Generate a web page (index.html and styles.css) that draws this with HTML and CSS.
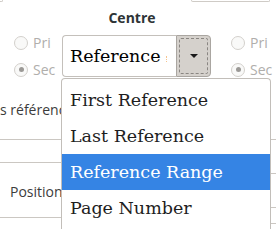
FILE: index.html
```html
<!DOCTYPE html>
<html>
<head>
<meta charset="utf-8">
<link rel="stylesheet" href="styles.css">
</head>
<body>
<div class="page">
  <div class="edges"><span class="edge-l"></span><span class="edge-r"></span></div>
  <div class="title">Centre</div>
  <div class="row">
    <div class="radios left">
      <label class="radio"><span class="circle"></span>Pri</label>
      <label class="radio"><span class="circle checked"></span>Sec</label>
    </div>
    <div class="select">
      <span class="sel-text">Reference</span>
      <span class="sel-btn"><span class="focus"><span class="tri"></span></span></span>
    </div>
    <div class="radios right">
      <label class="radio"><span class="circle"></span>Pri</label>
      <label class="radio"><span class="circle checked"></span>Sec</label>
    </div>
  </div>
  <div class="lower">
    <div class="lcol">
      <div class="cell c1">s références</div>
      <div class="cell c2"></div>
      <div class="cell c3">Position</div>
      <div class="cell c4"></div>
    </div>
    <div class="mid"></div>
    <div class="rcol">
      <div class="rc r1"></div>
      <div class="rc r2"></div>
      <div class="rc r3"></div>
      <div class="rc r4"></div>
    </div>
  </div>
  <ul class="menu">
    <li class="item">First Reference</li>
    <li class="item">Last Reference</li>
    <li class="item active">Reference Range</li>
    <li class="item">Page Number</li>
  </ul>
</div>
</body>
</html>
```

FILE: styles.css
```css
html, body {
  margin: 0;
  padding: 0;
  background: #ffffff;
}
.page {
  position: relative;
  width: 276px;
  height: 229px;
  overflow: hidden;
  font-family: "Open Sans", "Liberation Sans", sans-serif;
}
.edges {
  display: flex;
  height: 2px;
}
.edge-l {
  width: 2px;
  height: 1px;
  border-bottom: 1px solid #cfcbc6;
  border-right: 1px solid #cfcbc6;
  border-bottom-right-radius: 3px;
}
.edge-r {
  margin-left: 188px;
  width: 77px;
  height: 1px;
  border: 1px solid #cfcbc6;
  border-top: none;
  border-radius: 0 0 3px 3px;
}
.title {
  height: 32px;
  box-sizing: border-box;
  padding-top: 6px;
  padding-right: 12px;
  line-height: 19px;
  text-align: center;
  font-weight: bold;
  font-size: 14px;
  color: #2e3436;
}
.row {
  display: flex;
  height: 44px;
}
.radios {
  display: flex;
  flex-direction: column;
  gap: 10px;
}
.radios.left {
  width: 48px;
  padding-left: 14px;
}
.radios.right {
  padding-left: 20px;
}
.radio {
  display: flex;
  align-items: center;
  height: 17px;
  font-size: 14px;
  color: #b0aeab;
  white-space: nowrap;
}
.circle {
  box-sizing: border-box;
  width: 14px;
  height: 14px;
  border: 1px solid #d3d0cc;
  border-radius: 50%;
  background: #f9f9f8;
  margin-right: 5px;
  display: flex;
  align-items: center;
  justify-content: center;
}
.circle.checked::after {
  content: "";
  width: 5px;
  height: 5px;
  border-radius: 50%;
  background: #9b9996;
}
.select {
  display: flex;
  margin-top: 1px;
  height: 42px;
}
.sel-text {
  box-sizing: border-box;
  width: 114px;
  border: 1px solid #c4c0bb;
  border-right: none;
  border-radius: 4px 0 0 4px;
  padding-left: 7px;
  display: flex;
  align-items: center;
  font-family: "DejaVu Serif", serif;
  font-size: 17.5px;
  color: #000;
  position: relative;
}
.sel-text::after {
  content: "";
  position: absolute;
  left: 103px;
  top: 20px;
  height: 6px;
  border-left: 1px dotted #f6c48e;
}
.sel-btn {
  box-sizing: border-box;
  width: 35px;
  border: 1px solid #aaa6a1;
  border-radius: 0 4px 4px 0;
  background: #d5d1cc;
  padding: 2px;
  display: flex;
}
.focus {
  flex: 1;
  border: 1px dashed #8a8682;
  border-radius: 2px;
  display: flex;
  align-items: center;
  justify-content: center;
}
.tri {
  width: 0;
  height: 0;
  border-left: 4px solid transparent;
  border-right: 4px solid transparent;
  border-top: 4px solid #1a1a1a;
}
.lower {
  display: flex;
  height: 151px;
}
.lcol {
  width: 61px;
  overflow: hidden;
  font-size: 14px;
  color: #3c3c3c;
  white-space: nowrap;
}
.cell {
  box-sizing: border-box;
  border-bottom: 1px solid #cbc7c2;
}
.c1 {
  height: 62px;
  padding-top: 22px;
  line-height: 20px;
}
.c2 {
  height: 23px;
}
.c3 {
  height: 55px;
  padding-left: 10px;
  padding-top: 19px;
  line-height: 20px;
}
.c4 {
  height: 10px;
  border-bottom: none;
}
.mid {
  width: 210px;
}
.rcol {
  flex: 1;
}
.rc {
  box-sizing: border-box;
  border-bottom: 1px solid #cbc7c2;
}
.r1 { height: 62px; }
.r2 { height: 34px; }
.r3 { height: 34px; }
.r4 { height: 16px; }
.menu {
  position: absolute;
  left: 61px;
  top: 78px;
  width: 208px;
  height: 160px;
  margin: 0;
  padding: 3px 0 0 0;
  list-style: none;
  background: #ffffff;
  border: 1px solid #c2beb9;
  border-bottom: none;
  border-radius: 4px 4px 0 0;
}
.item {
  height: 36px;
  line-height: 36px;
  padding-left: 8px;
  font-family: "DejaVu Serif", serif;
  font-size: 17.5px;
  color: #1e1e1e;
  white-space: nowrap;
}
.item.active {
  background: #3584e4;
  color: #ffffff;
}
```
